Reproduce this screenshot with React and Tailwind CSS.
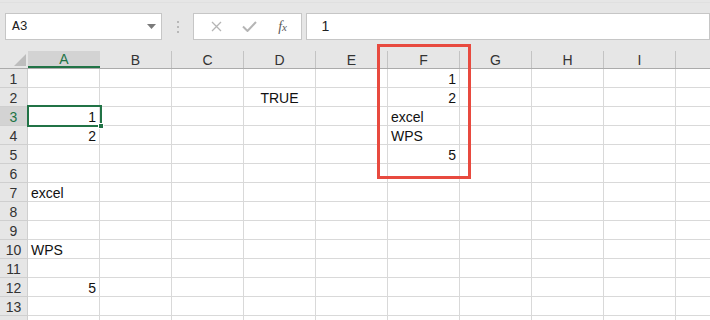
import React from "react";

const cols = ["A", "B", "C", "D", "E", "F", "G", "H", "I", "J"];

const data = {
  "A3": ["1", "r"],
  "A4": ["2", "r"],
  "A7": ["excel", "l"],
  "A10": ["WPS", "l"],
  "A12": ["5", "r"],
  "D2": ["TRUE", "c"],
  "F1": ["1", "r"],
  "F2": ["2", "r"],
  "F3": ["excel", "l"],
  "F4": ["WPS", "l"],
  "F5": ["5", "r"],
};

const font = { fontFamily: '"Liberation Sans", Arial, sans-serif' };

function Cell({ id }) {
  const d = data[id];
  let align = "justify-start pl-[3px]";
  if (d && d[1] === "r") align = "justify-end pr-[3px]";
  if (d && d[1] === "c") align = "justify-center";
  return (
    <div
      className={`w-[72px] shrink-0 h-full border-r border-b border-[#d9d9d9] bg-white flex items-end pb-[1px] ${align} text-[14px] text-[#111] leading-none`}
    >
      {d ? d[0] : null}
    </div>
  );
}

export default function App() {
  const rows = Array.from({ length: 14 }, (_, i) => i + 1);
  return (
    <div
      className="relative w-[710px] h-[320px] overflow-hidden bg-[#e6e6e6]"
      style={font}
    >
      <div className="h-[2px] bg-[#e6e6e6]" />
      <div className="h-[1px] bg-[#f2f2f2] border-b border-[#e0e0e0]" />
      {/* toolbar */}
      <div className="h-[48px] flex items-start pt-[10px]">
        <div className="ml-[5px] w-[158px] h-[27px] bg-white border border-[#c6c6c6] flex items-center justify-between pl-[6px] pr-[5px]">
          <span
            className="text-[13px] text-[#222]"
            style={{ fontFamily: '"Liberation Mono", "DejaVu Sans Mono", monospace' }}
          >
            A3
          </span>
          <svg width="9" height="5" viewBox="0 0 9 5">
            <path d="M0 0 L9 0 L4.5 5 Z" fill="#7a7a7a" />
          </svg>
        </div>
        <div className="w-[31px] h-[27px] flex flex-col items-center justify-center gap-[3px]">
          <div className="w-[2px] h-[2px] bg-[#b8b8b8]" />
          <div className="w-[2px] h-[2px] bg-[#b8b8b8]" />
          <div className="w-[2px] h-[2px] bg-[#b8b8b8]" />
        </div>
        <div className="w-[109px] h-[27px] bg-white border border-[#c6c6c6] flex items-center">
          <div className="w-[40px] flex justify-center pl-[4px]">
            <svg width="11" height="11" viewBox="0 0 11 11">
              <path d="M1 1 L10 10 M10 1 L1 10" stroke="#b5b5b5" strokeWidth="1.3" />
            </svg>
          </div>
          <div className="w-[32px] flex justify-center">
            <svg width="15" height="11" viewBox="0 0 15 11">
              <path d="M1 5.5 L5.5 10 L14 1" stroke="#b5b5b5" strokeWidth="2" fill="none" />
            </svg>
          </div>
          <div
            className="w-[36px] flex justify-center text-[#5a5a5a] italic text-[14px] pr-[2px]"
            style={{ fontFamily: '"Liberation Serif", "Times New Roman", serif' }}
          >
            f<span className="text-[11px] mt-[3px]">x</span>
          </div>
        </div>
        <div className="ml-[4px] w-[405px] h-[27px] bg-white border border-[#c6c6c6] flex items-center pl-[14px] text-[14px] text-[#222]">
          1
        </div>
      </div>
      {/* header row */}
      <div className="flex h-[18px] border-b border-[#ababab]">
        <div className="w-[28px] shrink-0 h-full flex items-end justify-end pr-[2px] pb-[2px]">
          <svg width="12" height="12" viewBox="0 0 12 12">
            <path d="M12 0 L12 12 L0 12 Z" fill="#bdbdbd" />
          </svg>
        </div>
        {cols.map((c) => (
          <div
            key={c}
            className={`w-[72px] shrink-0 h-full flex items-center justify-center text-[14px] leading-none ${
              c === "A"
                ? "bg-[#d3d3d3] text-[#217346] border-b-2 border-[#217346]"
                : "text-[#333] border-r border-[#c3c3c3]"
            }`}
          >
            {c === "J" ? "" : c}
          </div>
        ))}
      </div>
      {/* rows */}
      {rows.map((r) => (
        <div key={r} className="flex h-[19px]">
          <div
            className={`w-[28px] shrink-0 h-full border-b border-r border-[#cfcfcf] flex items-end pb-[1px] justify-center text-[14px] leading-none ${
              r === 3 ? "bg-[#d3d3d3] text-[#217346]" : "bg-[#e6e6e6] text-[#333]"
            }`}
          >
            {r === 14 ? "" : r}
          </div>
          {cols.map((c) => (
            <Cell key={c} id={`${c}${r}`} />
          ))}
        </div>
      ))}
      {/* selection */}
      <div className="absolute left-[27px] top-[105px] w-[75px] h-[22px] border-2 border-[#217346]" />
      <div className="absolute left-[98px] top-[123px] w-[6px] h-[6px] bg-[#217346] border border-white" />
      {/* red highlight box */}
      <div className="absolute left-[377px] top-[44px] w-[94px] h-[135px] border-[3px] border-[#e84a3f]" />
    </div>
  );
}
